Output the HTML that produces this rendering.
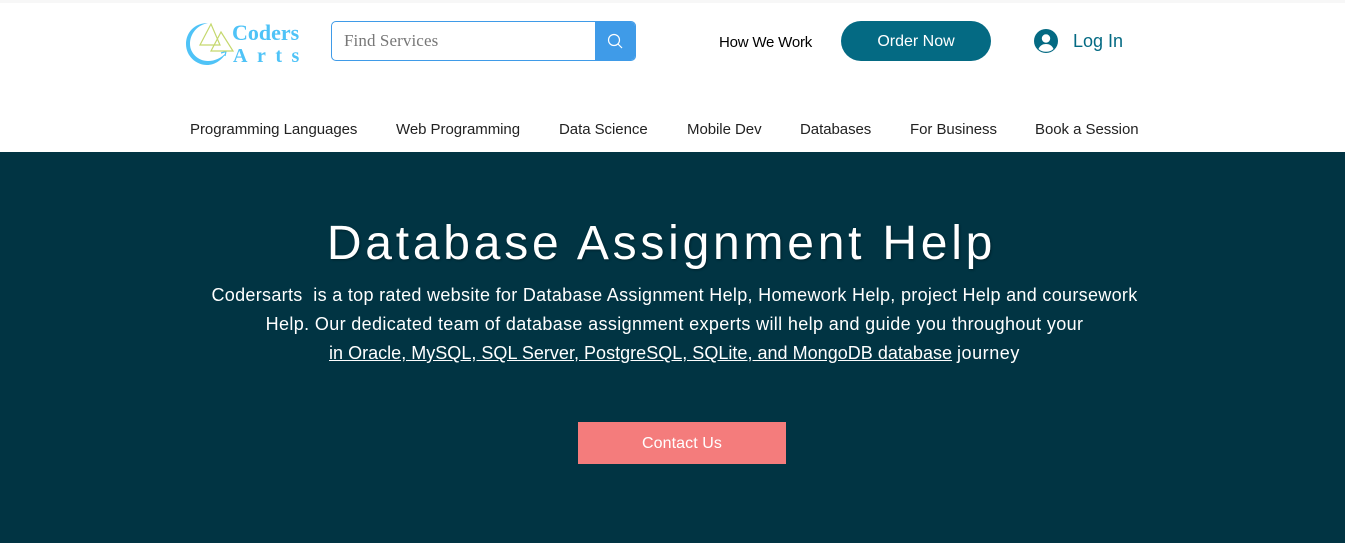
<!DOCTYPE html>
<html lang="en"><head><meta charset="utf-8"><title>Database Assignment Help</title>
<style>
*{margin:0;padding:0;box-sizing:border-box}
html,body{width:1345px;height:543px;overflow:hidden;background:#fff;font-family:"Liberation Sans",Arial,sans-serif}
.a{position:absolute;white-space:nowrap}
a{color:inherit;text-decoration:none}
.nav{top:121px;font-size:15px;line-height:18px;color:#222;letter-spacing:-.05px}
.p{left:2px;width:1345px;text-align:center;font-size:18px;line-height:29px;color:#fff}
.q{font-size:18px;line-height:29px;color:#fff}
</style></head><body>
<div class="a" style="left:0;top:0;width:1345px;height:3px;background:#f7f7f7"></div>

<svg class="a" style="left:184px;top:20px" width="60" height="48" viewBox="0 0 60 48">
<path d="M24 3C10 3 2 13 2 24C2 36 12 45 23 45C31 45 38 40 42 33C37 38 31 41 24 41C14 41 6 33 6 24C6 14 13 5 24 3Z" fill="#4fc3f7"/>
<path d="M37 33l5-1.500-1 4.500" fill="none" stroke="#4fc3f7" stroke-width="1.200"/>
<path d="M27 4L16 25H36Z M37 12L27 31H49Z" fill="none" stroke="#c5d86d" stroke-width="1.200"/>
</svg>
<div class="a" style="left:232px;top:21px;font:bold 22px/24px 'Liberation Serif',serif;color:#4fc3f7">Coders</div>
<div class="a" style="left:233px;top:44px;font:bold 20px/24px 'Liberation Serif',serif;color:#4fc3f7;letter-spacing:9.500px">Arts</div>

<div class="a" style="left:331px;top:21px;width:305px;height:40px;border:1px solid #3f9be8;border-radius:5px;background:#fff;overflow:hidden">
<div class="a" style="left:12px;top:9px;font:17px/20px 'Liberation Serif',serif;color:#777;letter-spacing:.1px">Find Services</div>
<div class="a" style="left:263px;top:-1px;width:41px;height:40px;background:#3f9be8">
<svg class="a" style="left:11px;top:11px" width="18" height="18" viewBox="0 0 18 18"><circle cx="8" cy="8" r="5.500" fill="none" stroke="#fff" stroke-width="1.200"/><path d="M12 12l4 4" stroke="#fff" stroke-width="1.200"/></svg>
</div></div>

<a class="a" href="#" style="left:719px;top:34px;font-size:15px;line-height:18px;color:#000;letter-spacing:-.2px">How We Work</a>
<a class="a" href="#" style="left:841px;top:21px;width:150px;height:40px;border-radius:20px;background:#046a83;color:#fff;font-size:16px;line-height:42px;text-align:center">Order Now</a>
<svg class="a" style="left:1034px;top:29px" width="24" height="24" viewBox="0 0 24 24"><circle cx="12" cy="12" r="12" fill="#046a83"/><circle cx="12" cy="9.500" r="4.200" fill="#fff"/><path d="M4.500 20c1.500-3.500 4-5 7.500-5s6 1.500 7.500 5c-2 1.800-4.500 2.800-7.500 2.800S6.500 21.800 4.500 20Z" fill="#fff"/></svg>
<a class="a" href="#" style="left:1073px;top:30px;font-size:18px;line-height:22px;color:#046a83">Log In</a>

<a class="a nav" href="#" style="left:190px">Programming Languages</a>
<a class="a nav" href="#" style="left:396px">Web Programming</a>
<a class="a nav" href="#" style="left:559px">Data Science</a>
<a class="a nav" href="#" style="left:687px">Mobile Dev</a>
<a class="a nav" href="#" style="left:800px">Databases</a>
<a class="a nav" href="#" style="left:910px">For Business</a>
<a class="a nav" href="#" style="left:1035px">Book a Session</a>

<div class="a" style="left:0;top:152px;width:1345px;height:391px;background:#013443"></div>
<h1 class="a" style="left:0;top:216px;width:1323px;text-align:center;font-size:48px;line-height:56px;font-weight:400;letter-spacing:3.760px;color:#fff;text-shadow:1px 1px 2px rgba(0,0,0,.35)">Database Assignment Help</h1>
<div class="a p" style="top:281px;letter-spacing:.315px">Codersarts&nbsp; is a top rated website for Database Assignment Help, Homework Help, project Help and coursework</div>
<div class="a p" style="top:310px;letter-spacing:.36px">Help. Our dedicated team of database assignment experts will help and guide you throughout your</div>
<div class="a q" style="left:329px;top:339px;letter-spacing:.02px"><u>in Oracle, MySQL, SQL Server, PostgreSQL, SQLite, and MongoDB database</u></div>
<div class="a q" style="left:957px;top:339px;letter-spacing:.55px">journey</div>

<a class="a" href="#" style="left:578px;top:422px;width:208px;height:42px;background:#f47c7c;color:#fff;font-size:16px;line-height:44px;text-align:center;letter-spacing:.08px">Contact Us</a>
</body></html>
